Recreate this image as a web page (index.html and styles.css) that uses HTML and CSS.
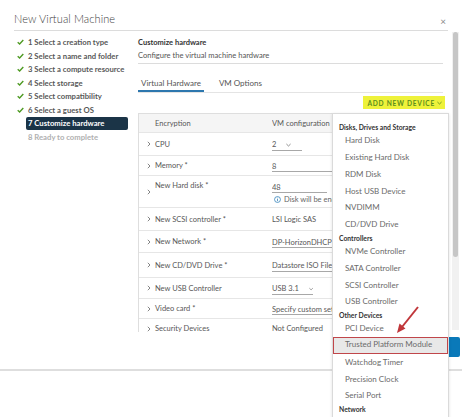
FILE: index.html
```html
<!DOCTYPE html>
<html>
<head>
<meta charset="utf-8">
<link rel="stylesheet" href="styles.css">
</head>
<body>
<div class="dialog">
  <div class="dlg-head">
    <h1 class="title">New Virtual Machine</h1>
    <span class="close">×</span>
  </div>
  <div class="dlg-body">
    <ol class="steps">
      <li class="done"><svg class="check" viewBox="0 0 8 6"><polyline points="0.8,3.2 3,5.2 7.2,0.8"/></svg>1 Select a creation type</li>
      <li class="done"><svg class="check" viewBox="0 0 8 6"><polyline points="0.8,3.2 3,5.2 7.2,0.8"/></svg>2 Select a name and folder</li>
      <li class="done"><svg class="check" viewBox="0 0 8 6"><polyline points="0.8,3.2 3,5.2 7.2,0.8"/></svg>3 Select a compute resource</li>
      <li class="done"><svg class="check" viewBox="0 0 8 6"><polyline points="0.8,3.2 3,5.2 7.2,0.8"/></svg>4 Select storage</li>
      <li class="done"><svg class="check" viewBox="0 0 8 6"><polyline points="0.8,3.2 3,5.2 7.2,0.8"/></svg>5 Select compatibility</li>
      <li class="done"><svg class="check" viewBox="0 0 8 6"><polyline points="0.8,3.2 3,5.2 7.2,0.8"/></svg>6 Select a guest OS</li>
      <li class="active">7 Customize hardware</li>
      <li class="todo">8 Ready to complete</li>
    </ol>
    <div class="main">
      <div class="sec-head">
        <div class="sec-title">Customize hardware</div>
        <div class="sec-sub">Configure the virtual machine hardware</div>
      </div>
      <div class="tabs">
        <span class="tab active">Virtual Hardware</span>
        <span class="tab">VM Options</span>
      </div>
      <div class="actions">
        <span class="add">ADD NEW DEVICE <svg class="caret" viewBox="0 0 6 4"><polyline points="0.5,0.8 3,3.2 5.5,0.8"/></svg></span>
      </div>
      <div class="table">
        <div class="row head h19">
          <div class="c1"><span class="lbl">Encryption</span></div>
          <div class="c2">VM configuration</div>
        </div>
        <div class="row h23">
          <div class="c1"><svg class="chev" viewBox="0 0 4 6"><polyline points="0.8,0.8 3,3 0.8,5.2"/></svg><span class="lbl">CPU</span></div>
          <div class="c2"><span class="inp w30">2 <svg class="caret g" viewBox="0 0 6 4"><polyline points="0.5,0.8 3,3.2 5.5,0.8"/></svg></span></div>
        </div>
        <div class="row h20">
          <div class="c1"><svg class="chev" viewBox="0 0 4 6"><polyline points="0.8,0.8 3,3 0.8,5.2"/></svg><span class="lbl">Memory *</span></div>
          <div class="c2"><span class="inp w80">8</span></div>
        </div>
        <div class="row h32">
          <div class="c1"><svg class="chev" viewBox="0 0 4 6"><polyline points="0.8,0.8 3,3 0.8,5.2"/></svg><span class="lbl top">New Hard disk *</span></div>
          <div class="c2 stack">
            <span class="inp w55">48</span>
            <span class="note"><svg class="info" viewBox="0 0 10 10"><circle cx="5" cy="5" r="4.2"/><line x1="5" y1="4.3" x2="5" y2="7.4"/><circle class="dot" cx="5" cy="2.8" r="0.6"/></svg>Disk will be encrypted</span>
          </div>
        </div>
        <div class="row h23">
          <div class="c1"><svg class="chev" viewBox="0 0 4 6"><polyline points="0.8,0.8 3,3 0.8,5.2"/></svg><span class="lbl">New SCSI controller *</span></div>
          <div class="c2">LSI Logic SAS</div>
        </div>
        <div class="row h22">
          <div class="c1"><svg class="chev" viewBox="0 0 4 6"><polyline points="0.8,0.8 3,3 0.8,5.2"/></svg><span class="lbl">New Network *</span></div>
          <div class="c2"><span class="inp w80">DP-HorizonDHCP</span></div>
        </div>
        <div class="row h25">
          <div class="c1"><svg class="chev" viewBox="0 0 4 6"><polyline points="0.8,0.8 3,3 0.8,5.2"/></svg><span class="lbl">New CD/DVD Drive *</span></div>
          <div class="c2"><span class="inp w80">Datastore ISO File</span></div>
        </div>
        <div class="row h21">
          <div class="c1"><svg class="chev" viewBox="0 0 4 6"><polyline points="0.8,0.8 3,3 0.8,5.2"/></svg><span class="lbl">New USB Controller</span></div>
          <div class="c2"><span class="inp w41">USB 3.1 <svg class="caret g" viewBox="0 0 6 4"><polyline points="0.5,0.8 3,3.2 5.5,0.8"/></svg></span></div>
        </div>
        <div class="row h20">
          <div class="c1"><svg class="chev" viewBox="0 0 4 6"><polyline points="0.8,0.8 3,3 0.8,5.2"/></svg><span class="lbl">Video card *</span></div>
          <div class="c2"><span class="inp w80">Specify custom settings</span></div>
        </div>
        <div class="row h20">
          <div class="c1"><svg class="chev" viewBox="0 0 4 6"><polyline points="0.8,0.8 3,3 0.8,5.2"/></svg><span class="lbl">Security Devices</span></div>
          <div class="c2">Not Configured</div>
        </div>
      </div>
    </div>
  </div>
  <div class="footer">
    <button class="next" aria-label="Next"></button>
  </div>

  <div class="scrollbar"><div class="thumb"></div></div>

  <div class="menu">
    <div class="mh">Disks, Drives and Storage</div>
    <div class="mi">Hard Disk</div>
    <div class="mi">Existing Hard Disk</div>
    <div class="mi">RDM Disk</div>
    <div class="mi">Host USB Device</div>
    <div class="mi">NVDIMM</div>
    <div class="mi">CD/DVD Drive</div>
    <div class="mh">Controllers</div>
    <div class="mi">NVMe Controller</div>
    <div class="mi">SATA Controller</div>
    <div class="mi">SCSI Controller</div>
    <div class="mi">USB Controller</div>
    <div class="mh">Other Devices</div>
    <div class="mi">PCI Device</div>
    <div class="mi sel">Trusted Platform Module</div>
    <div class="mi">Watchdog Timer</div>
    <div class="mi">Precision Clock</div>
    <div class="mi">Serial Port</div>
    <div class="mh">Network</div>
  </div>

  <svg class="arrow" viewBox="0 0 40 40">
    <line x1="28" y1="7" x2="12" y2="27"/>
    <polygon points="7,33 9.5,23.5 15.5,28.5"/>
  </svg>
</div>
</body>
</html>
```

FILE: styles.css
```css
* { box-sizing: border-box; }
html, body { margin: 0; padding: 0; }
body {
  width: 474px;
  height: 417px;
  overflow: hidden;
  background: #fff;
  font-family: Lato, "Open Sans", sans-serif;
  color: #565656;
}
.dialog {
  position: relative;
  width: 474px;
  height: 417px;
}
.dlg-head {
  display: flex;
  justify-content: space-between;
  align-items: flex-end;
  margin-left: 14px;
  width: 434px;
  height: 31px;
  border-bottom: 1px solid #dcdcdc;
}
.title {
  margin: 0 0 4px 0;
  font-size: 11px;
  line-height: 14px;
  font-weight: 300;
  color: #3a3a3a;
  letter-spacing: 0.1px;
}
.close {
  font-size: 10px;
  line-height: 10px;
  color: #8a8a8a;
  margin: 0 2px 4px 0;
}
.dlg-body {
  display: flex;
  height: 301px;
  overflow: hidden;
}
.steps {
  list-style: none;
  margin: 0;
  padding: 4.5px 0 0 0;
  width: 138px;
  flex: none;
}
.steps li {
  display: flex;
  align-items: center;
  height: 13.5px;
  font-size: 7.7px;
  font-weight: 700;
  color: #585858;
  padding-left: 17px;
  white-space: nowrap;
}
.check {
  width: 7px;
  height: 6px;
  margin-right: 4px;
  fill: none;
  stroke: #4e9a22;
  stroke-width: 1.6;
}
.steps li.active {
  margin-left: 26px;
  width: 102px;
  padding-left: 2px;
  background: #1b3447;
  color: #fff;
  border-radius: 2px;
}
.steps li.todo {
  padding-left: 28px;
  color: #b0b0b0;
}
.main {
  width: 307px;
  flex: none;
}
.sec-head {
  width: 305px;
  padding-top: 6px;
  padding-bottom: 2px;
  border-bottom: 1px solid #dcdcdc;
}
.sec-title {
  font-size: 7.5px;
  font-weight: 700;
  line-height: 12px;
  color: #333;
}
.sec-sub {
  font-size: 7.6px;
  line-height: 12px;
  color: #555;
}
.tabs {
  display: flex;
  gap: 12px;
  width: 305px;
  border-bottom: 1px solid #e4e4e4;
}
.tab {
  font-size: 8px;
  line-height: 12px;
  padding: 13px 3px 3px;
  color: #555;
}
.tab.active {
  box-shadow: inset 0 -2px 0 #2d77ae;
}
.actions {
  display: flex;
  justify-content: flex-end;
  padding-top: 3px;
  width: 307px;
}
.add {
  display: flex;
  align-items: center;
  height: 13px;
  padding: 0 3px 0 4px;
  background: #eef23a;
  color: #5b8e1d;
  font-size: 6.6px;
  font-weight: 700;
  letter-spacing: 0.75px;
}
.caret {
  width: 5px;
  height: 4px;
  margin-left: 2px;
  fill: none;
  stroke: #5b8e1d;
  stroke-width: 1;
}
.caret.g {
  stroke: #777;
  margin-left: 10px;
}
.table {
  margin-top: 4px;
  width: 305px;
  border: 1px solid #dedede;
  border-bottom: none;
}
.row {
  display: grid;
  grid-template-columns: 133px 1fr;
  border-bottom: 1px solid #e6e6e6;
  font-size: 7.5px;
  color: #575757;
}
.row.head { background: #f5f5f5; }
.h19 { height: 19px; }
.h20 { height: 20px; }
.h21 { height: 21px; }
.h22 { height: 22px; }
.h23 { height: 23px; }
.h25 { height: 25px; }
.h32 { height: 32px; }
.c1 {
  display: flex;
  align-items: center;
  padding-left: 8px;
}
.head .c1 { padding-left: 16px; }
.chev {
  width: 4px;
  height: 6px;
  margin-right: 4px;
  fill: none;
  stroke: #777;
  stroke-width: 0.9;
}
.lbl.top {
  align-self: flex-start;
  padding-top: 5px;
}
.c2 {
  display: flex;
  align-items: center;
  white-space: nowrap;
  overflow: hidden;
}
.c2.stack {
  flex-direction: column;
  align-items: flex-start;
  padding-top: 4px;
}
.inp {
  display: inline-flex;
  align-items: center;
  height: 13px;
  border-bottom: 1px solid #a8a8a8;
  padding-top: 2px;
  white-space: nowrap;
}
.w30 { width: 30px; }
.w41 { width: 41px; }
.w55 { width: 55px; }
.w80 { width: 80px; }
.note {
  display: flex;
  align-items: center;
  margin-top: 2px;
  color: #666;
}
.info {
  width: 7px;
  height: 7px;
  margin: 0 3px 0 2px;
  fill: none;
  stroke: #2f7fb8;
  stroke-width: 1.1;
}
.info .dot { fill: #2f7fb8; stroke: none; }
.footer {
  display: flex;
  justify-content: flex-end;
  align-items: flex-start;
  width: 462px;
  height: 39px;
  padding: 5px 2px 0 0;
  border-bottom: 2px solid #dedede;
}
.next {
  width: 60px;
  height: 20px;
  border: none;
  border-radius: 2px;
  background: #0a79b9;
}
.scrollbar {
  position: absolute;
  left: 452px;
  top: 32px;
  width: 7px;
  height: 298px;
  background: #f1f1f1;
}
.thumb {
  margin-left: 1px;
  width: 5px;
  height: 225px;
  background: #c6c6c6;
  border-radius: 3px;
}
.menu {
  position: absolute;
  left: 332px;
  top: 113px;
  width: 117px;
  height: 310px;
  padding-top: 8px;
  background: #fff;
  border: 1px solid #dadada;
  box-shadow: 0 1px 3px rgba(0,0,0,0.12);
}
.mh {
  height: 10.25px;
  line-height: 10.25px;
  padding-left: 6px;
  font-size: 6.8px;
  font-weight: 700;
  color: #333;
  white-space: nowrap;
}
.mi {
  height: 16.75px;
  line-height: 16.75px;
  padding-left: 12px;
  font-size: 8px;
  color: #6a6a6a;
  white-space: nowrap;
}
.mi.sel {
  background: #e8e8e8;
  border: 1.5px solid #c0464a;
  line-height: 13.75px;
  padding-left: 11px;
  width: 115px;
}
.arrow {
  position: absolute;
  left: 390px;
  top: 300px;
  width: 40px;
  height: 40px;
}
.arrow line {
  stroke: #c0363a;
  stroke-width: 2;
}
.arrow polygon {
  fill: #c0363a;
}
```
